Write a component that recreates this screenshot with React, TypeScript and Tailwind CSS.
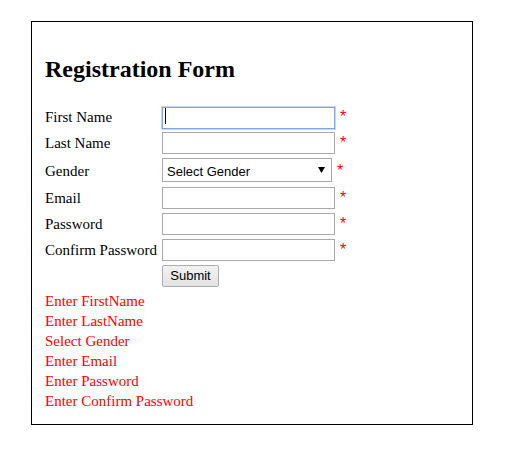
import { useState } from 'react';

const fields = [
  { label: 'First Name', name: 'firstName', type: 'text' },
  { label: 'Last Name', name: 'lastName', type: 'text' },
  { label: 'Gender', name: 'gender', type: 'select' },
  { label: 'Email', name: 'email', type: 'text' },
  { label: 'Password', name: 'password', type: 'password' },
  { label: 'Confirm Password', name: 'confirm', type: 'password' },
];

const errors = [
  'Enter FirstName',
  'Enter LastName',
  'Select Gender',
  'Enter Email',
  'Enter Password',
  'Enter Confirm Password',
];

function Star() {
  return <span className="font-['Liberation_Sans',Arial,sans-serif] text-[16px] text-[#ff0000]">*</span>;
}

export default function App() {
  const [gender, setGender] = useState('');

  return (
    <div className="min-h-screen bg-white pt-[21px] pl-[31px] font-['Liberation_Serif','Times_New_Roman',serif] text-black">
      <div className="h-[404px] w-[442px] border border-black pt-[33px] pl-[13px]">
        <h2 className="h-[28px] text-[24px] leading-[28px] font-bold">Registration Form</h2>

        <form className="mt-[23px] flex flex-col gap-[4px]" onSubmit={(e) => e.preventDefault()}>
          {fields.map((f, i) => (
            <div
              key={f.name}
              className={f.type === 'select' ? 'flex h-[25px] items-center' : 'flex h-[22px] items-center'}
            >
              <label className="w-[117px] shrink-0 text-[15px] leading-[22px]">{f.label}</label>
              <div className="flex items-center gap-[5px]">
                {f.type === 'select' ? (
                  <div className="relative">
                    <select
                      value={gender}
                      onChange={(e) => setGender(e.target.value)}
                      className="h-[24px] w-[170px] appearance-none rounded-none border border-[#a9a9a9] bg-white pt-[2px] pl-[4px] font-['Liberation_Sans',Arial,sans-serif] text-[13px] text-black outline-none"
                    >
                      <option value="">Select Gender</option>
                      <option value="male">Male</option>
                      <option value="female">Female</option>
                    </select>
                    <svg
                      className="pointer-events-none absolute top-[9px] right-[7px]"
                      width="7"
                      height="6"
                      viewBox="0 0 7 6"
                    >
                      <path d="M0 0h7L3.5 6z" fill="#000" />
                    </svg>
                  </div>
                ) : i === 0 ? (
                  <div className="relative">
                    <input
                      type={f.type}
                      className="h-[22px] w-[173px] rounded-none border border-[#7aa7ea] bg-white outline outline-1 outline-[#c3d7f5] font-['Liberation_Sans',Arial,sans-serif] text-[13px]"
                    />
                    <span className="pointer-events-none absolute top-[3px] left-[3px] h-[16px] w-[1px] bg-black" />
                  </div>
                ) : (
                  <input
                    type={f.type}
                    className="h-[22px] w-[173px] rounded-none border border-[#a9a9a9] bg-white outline-none font-['Liberation_Sans',Arial,sans-serif] text-[13px]"
                  />
                )}
                <Star />
              </div>
            </div>
          ))}
          <div className="flex h-[22px] items-center pl-[117px]">
            <button
              type="submit"
              className="h-[22px] w-[57px] rounded-[2px] border border-[#acacac] bg-gradient-to-b from-[#f2f2f2] to-[#e3e3e3] font-['Liberation_Sans',Arial,sans-serif] text-[13px] leading-[20px] text-black"
            >
              Submit
            </button>
          </div>
        </form>

        <div className="mt-[4px] flex flex-col text-[15px] leading-[20px] text-[#ff0000]">
          {errors.map((e) => (
            <span key={e}>{e}</span>
          ))}
        </div>
      </div>
    </div>
  );
}
